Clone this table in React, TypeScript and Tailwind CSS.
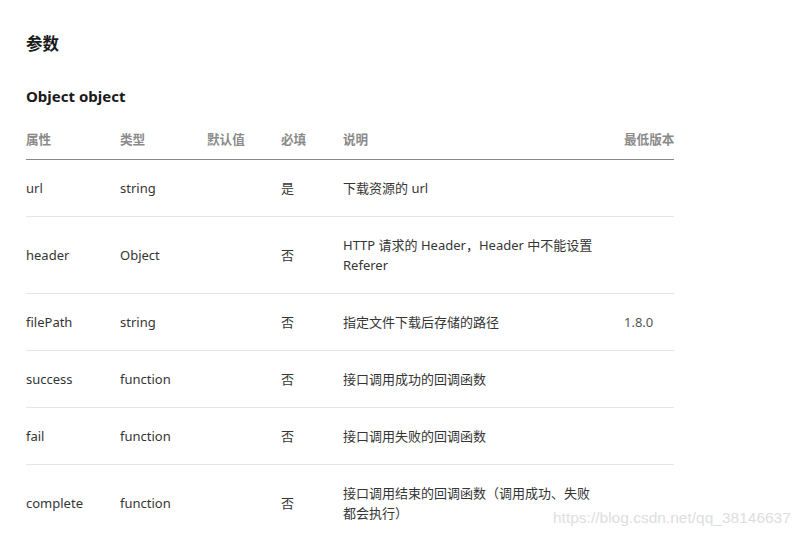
import React from 'react';

interface ParamRow {
    name: string;
    type: string;
    defaultValue?: string;
    required: string;
    desc: string[];
    version?: string;
}

const rows: ParamRow[] = [
    { name: 'url', type: 'string', required: '是', desc: ['下载资源的 url'] },
    { name: 'header', type: 'Object', required: '否', desc: ['HTTP 请求的 Header，Header 中不能设置', 'Referer'] },
    { name: 'filePath', type: 'string', required: '否', desc: ['指定文件下载后存储的路径'], version: '1.8.0' },
    { name: 'success', type: 'function', required: '否', desc: ['接口调用成功的回调函数'] },
    { name: 'fail', type: 'function', required: '否', desc: ['接口调用失败的回调函数'] },
    { name: 'complete', type: 'function', required: '否', desc: ['接口调用结束的回调函数（调用成功、失败', '都会执行）'] },
];

const headers = ['属性', '类型', '默认值', '必填', '说明', '最低版本'];
const colWidths = ['w-[94px]', 'w-[87px]', 'w-[74px]', 'w-[62px]', 'w-[281px]', 'w-[50px]'];

export default function App() {
    return (
        <div
            className="relative w-[805px] h-[536px] overflow-hidden bg-white pl-[26px]"
            style={{ fontFamily: '"Noto Sans", "Noto Sans CJK SC", sans-serif' }}
        >
            <h2 className="pt-[32px] text-[16.5px] leading-[24px] font-bold text-[#1a1a1a]">参数</h2>
            <h3 className="mt-[29px] text-[15px] leading-[22px] font-bold text-[#1a1a1a]">Object object</h3>

            <table className="mt-[13px] w-[648px] table-fixed border-collapse text-[13px] leading-[20px]">
                <thead>
                    <tr className="border-b border-[#888888]">
                        {headers.map((h, i) => (
                            <th
                                key={h}
                                className={`${colWidths[i]} pt-[10px] pb-[9px] text-left font-bold text-[12.6px] text-[#8a8a8a] whitespace-nowrap`}
                            >
                                {h}
                            </th>
                        ))}
                    </tr>
                </thead>
                <tbody className="text-[#353535]">
                    {rows.map((r) => (
                        <tr key={r.name} className="border-b border-[#e5e5e5]">
                            <td className="py-[18px]">{r.name}</td>
                            <td className="py-[18px]">{r.type}</td>
                            <td className="py-[18px]">{r.defaultValue ?? ''}</td>
                            <td className="py-[18px]">{r.required}</td>
                            <td className="py-[18px] whitespace-nowrap">
                                {r.desc.map((line) => (
                                    <div key={line}>{line}</div>
                                ))}
                            </td>
                            <td className="py-[18px] whitespace-nowrap text-[#555555]">{r.version ?? ''}</td>
                        </tr>
                    ))}
                </tbody>
            </table>

            {/* 水印 */}
            <div
                className="absolute left-[553px] top-[507px] text-[15.5px] leading-[22px] text-[#dedede] whitespace-nowrap"
                style={{ fontFamily: '"Liberation Sans", Arial, sans-serif' }}
            >
                https://blog.csdn.net/qq_38146637
            </div>
        </div>
    );
}
